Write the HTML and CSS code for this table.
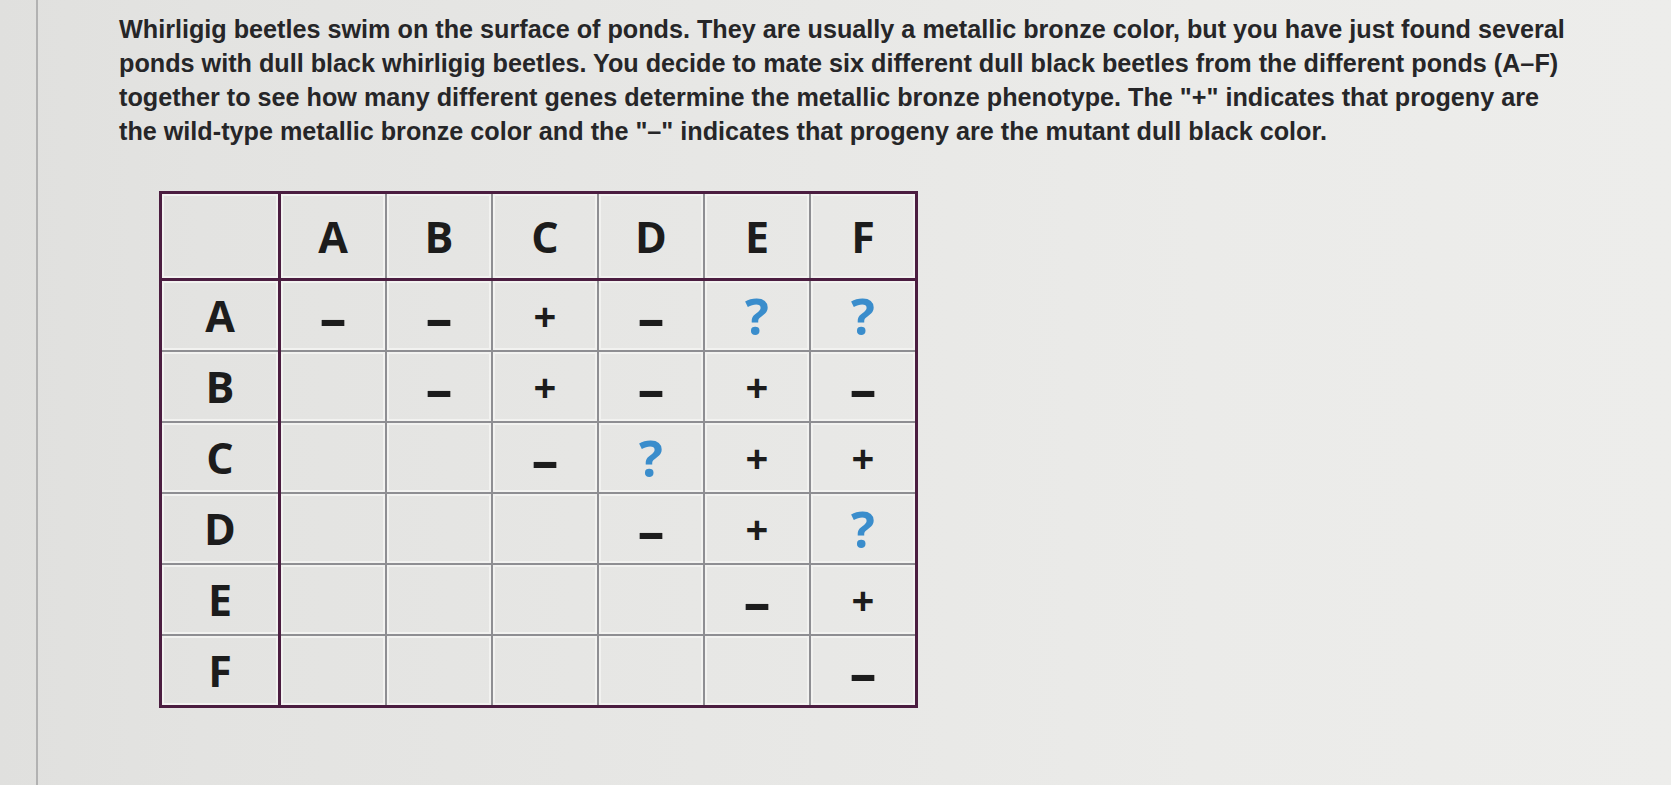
FILE: index.html
```html
<!DOCTYPE html>
<html>
<head>
<meta charset="utf-8">
<link rel="stylesheet" href="styles.css">
</head>
<body>
<div class="page">
  <div class="margin-line"></div>
  <div class="content">
    <p class="question">Whirligig beetles swim on the surface of ponds. They are usually a metallic bronze color, but you have just found several<br>ponds with dull black whirligig beetles. You decide to mate six different dull black beetles from the different ponds (A–F)<br>together to see how many different genes determine the metallic bronze phenotype. The "+" indicates that progeny are<br>the wild-type metallic bronze color and the "–" indicates that progeny are the mutant dull black color.</p>
    <table class="grid">
      <tr class="head">
        <th class="corner"></th><th>A</th><th>B</th><th>C</th><th>D</th><th>E</th><th>F</th>
      </tr>
      <tr>
        <th>A</th><td class="m">–</td><td class="m">–</td><td class="p">+</td><td class="m">–</td><td class="q">?</td><td class="q">?</td>
      </tr>
      <tr>
        <th>B</th><td></td><td class="m">–</td><td class="p">+</td><td class="m">–</td><td class="p">+</td><td class="m">–</td>
      </tr>
      <tr>
        <th>C</th><td></td><td></td><td class="m">–</td><td class="q">?</td><td class="p">+</td><td class="p">+</td>
      </tr>
      <tr>
        <th>D</th><td></td><td></td><td></td><td class="m">–</td><td class="p">+</td><td class="q">?</td>
      </tr>
      <tr>
        <th>E</th><td></td><td></td><td></td><td></td><td class="m">–</td><td class="p">+</td>
      </tr>
      <tr>
        <th>F</th><td></td><td></td><td></td><td></td><td></td><td class="m">–</td>
      </tr>
    </table>
  </div>
</div>
</body>
</html>
```
FILE: styles.css
```css
html, body {
  margin: 0;
  padding: 0;
}
body {
  width: 1671px;
  height: 785px;
  overflow: hidden;
  background: linear-gradient(90deg, #e0e0de 0px, #e3e3e1 200px, #e7e7e5 700px, #ebebe9 1200px, #ededeb 1671px);
}
.page {
  display: flex;
  height: 785px;
}
.margin-line {
  width: 2px;
  margin-left: 36px;
  background: #b2b2b2;
  flex: none;
}
.content {
  padding: 12px 0 0 81px;
  flex: 1;
}
.question {
  margin: 0;
  white-space: nowrap;
  font-family: "Liberation Sans", Arial, sans-serif;
  font-weight: bold;
  font-size: 25.2px;
  line-height: 34px;
  color: #262628;
}
.grid {
  margin: 43px 0 0 40px;
  border-collapse: collapse;
  border: 3px solid #4b1d40;
  font-family: "Open Sans", "Noto Sans", sans-serif;
  font-weight: 700;
  color: #1c1c1c;
}
.grid th, .grid td {
  border: 2px solid #8e8e92;
  text-align: center;
  vertical-align: middle;
  padding: 0;
  width: 104px;
  height: 69px;
  line-height: 1;
  box-shadow: inset 0 0 0 2px #f2f2f0;
}
.grid th {
  font-size: 43px;
  font-weight: 700;
}
.grid tr > th:first-child {
  width: 116px;
  border-right: 3px solid #4b1d40;
}
.grid .head th {
  height: 84px;
  border-bottom: 3px solid #4b1d40;
  border-top: 3px solid #4b1d40;
}
.grid td.m {
  font-size: 54px;
}
.grid td.p {
  font-size: 40px;
}
.grid td.q {
  color: #3a8dcc;
  font-size: 50px;
}
```
